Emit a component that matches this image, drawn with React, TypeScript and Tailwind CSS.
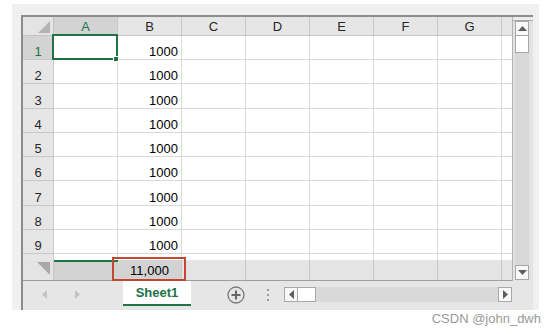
import React from 'react';

const cols = ['A', 'B', 'C', 'D', 'E', 'F', 'G'];
const rows = [1, 2, 3, 4, 5, 6, 7, 8, 9];

function CornerCell() {
  return (
    <div className="relative w-[31px] h-full shrink-0 bg-[#e4e4e4] border-r border-[#c4c4c4]">
      <svg className="absolute left-[15px] top-[4px]" width="12" height="12" viewBox="0 0 12 12">
        <polygon points="12,0 12,12 0,12" fill="#b4b4b4" />
      </svg>
    </div>
  );
}

function HeaderRow() {
  return (
    <div className="flex h-[19px] shrink-0 border-b border-[#c4c4c4]">
      <CornerCell />
      {cols.map((c) => (
        <div
          key={c}
          className={`w-[64px] shrink-0 h-full flex items-center justify-center pt-[1px] text-[13px] border-r border-[#c8c8c8] ${
            c === 'A' ? 'bg-[#d3d3d3] text-[#217346]' : 'bg-[#e6e6e6] text-[#262626]'
          }`}
        >
          {c}
        </div>
      ))}
      <div className="flex-1 h-full bg-[#e6e6e6]" />
    </div>
  );
}

function DataRow({ n }: { n: number }) {
  // rows in the shot are a hair over 24px, so two of them get an extra pixel
  const tall = n === 3 || n === 7;
  return (
    <div className={`flex shrink-0 ${tall ? 'h-[25px]' : 'h-[24px]'}`}>
      <div
        className={`w-[31px] shrink-0 h-full flex items-end justify-center pb-[1px] leading-[13px] text-[13px] border-r border-b border-[#c8c8c8] ${
          n === 1 ? 'bg-[#d3d3d3] text-[#217346]' : 'bg-[#e6e6e6] text-[#262626]'
        }`}
      >
        {n}
      </div>
      {/* column A */}
      <div className="relative w-[64px] shrink-0 h-full bg-white border-r border-b border-[#d9d9d9]">
        {n === 1 && (
          <div className="absolute -left-[2px] -top-[2px] w-[66px] h-[26px] border-2 border-[#217346] z-10">
            <div className="absolute -right-[3px] -bottom-[4px] w-[6px] h-[6px] bg-[#217346] border border-white" />
          </div>
        )}
      </div>
      {/* column B */}
      <div className="w-[64px] shrink-0 h-full bg-white border-r border-b border-[#d9d9d9] flex items-end justify-end pr-[3px] pb-[1px] leading-[13px] text-[13px] text-black">
        1000
      </div>
      {cols.slice(2).map((c) => (
        <div key={c} className="w-[64px] shrink-0 h-full bg-white border-r border-b border-[#d9d9d9]" />
      ))}
      <div className="flex-1 h-full bg-white border-b border-[#d9d9d9]" />
    </div>
  );
}

function PartialRow() {
  return (
    <div className="flex h-[6px] shrink-0">
      <div className="w-[31px] shrink-0 h-full bg-[#e6e6e6] border-r border-[#c8c8c8]" />
      {cols.map((c) => (
        <div key={c} className="w-[64px] shrink-0 h-full bg-white border-r border-[#d9d9d9]" />
      ))}
      <div className="flex-1 h-full bg-white" />
    </div>
  );
}

function TotalBand() {
  return (
    <div className="relative flex h-[21px] shrink-0 border-b border-[#9e9e9e] bg-[#e4e4e4]">
      <div className="relative w-[31px] shrink-0 h-full border-r border-[#c8c8c8]">
        <svg className="absolute left-[14px] top-[2px]" width="13" height="13" viewBox="0 0 13 13">
          <polygon points="0,0 13,0 13,13" fill="#a9a9a9" />
        </svg>
      </div>
      <div className="w-[64px] shrink-0 h-full bg-[#d2d2d2] border-t-2 border-[#217346]" />
      <div className="w-[64px] shrink-0 h-full bg-[#d2d2d2] border-r border-[#c8c8c8] flex items-center justify-center pt-[2px] text-[13px] text-black">
        11,000
      </div>
      {cols.slice(2).map((c) => (
        <div key={c} className="w-[64px] shrink-0 h-full border-r border-[#c8c8c8]" />
      ))}
      <div className="flex-1 h-full" />
      {/* annotation box */}
      <div className="absolute left-[89px] -top-[3px] w-[74px] h-[24px] border-2 border-[#c2472f]" />
    </div>
  );
}

function VScroll() {
  return (
    <div className="w-[21px] shrink-0 flex flex-col bg-[#e3e3e3] border-l border-[#b4b4b4]">
      <div className="h-[4px] shrink-0 bg-[#ededed] border-b border-[#a8a8a8]" />
      <div className="pl-[2px] pr-[4px] flex flex-col flex-1">
        <div className="h-[15px] shrink-0 bg-[#f8f8f8] border border-[#a8a8a8] flex items-center justify-center">
          <svg width="9" height="5" viewBox="0 0 9 5">
            <polygon points="0,5 9,5 4.5,0" fill="#5e5e5e" />
          </svg>
        </div>
        <div className="h-[17px] shrink-0 bg-white border border-t-0 border-[#a8a8a8]" />
        <div className="flex-1 bg-[#d8d8d8]" />
        <div className="h-[15px] shrink-0 bg-[#f8f8f8] border border-[#a8a8a8] flex items-center justify-center">
          <svg width="9" height="5" viewBox="0 0 9 5">
            <polygon points="0,0 9,0 4.5,5" fill="#5e5e5e" />
          </svg>
        </div>
        <div className="h-[1px] shrink-0" />
      </div>
    </div>
  );
}

function BottomBar() {
  return (
    <div className="flex h-[29px] shrink-0 bg-[#e6e6e6] items-start">
      <div className="flex items-center h-[26px] pl-[19px]">
        <svg width="5" height="9" viewBox="0 0 5 9">
          <polygon points="5,0 5,9 0,4.5" fill="#c3c3c3" />
        </svg>
        <svg className="ml-[28px]" width="5" height="9" viewBox="0 0 5 9">
          <polygon points="0,0 0,9 5,4.5" fill="#c3c3c3" />
        </svg>
      </div>
      <div className="ml-[43px] w-[68px] h-[25px] shrink-0 bg-white border-b-2 border-[#217346] flex items-center justify-center pt-[1px] text-[13px] font-bold text-[#217346]">
        Sheet1
      </div>
      <div className="ml-[36px] mt-[5px] shrink-0">
        <svg width="18" height="18" viewBox="0 0 18 18">
          <circle cx="9" cy="9" r="8" fill="none" stroke="#7a7a7a" strokeWidth="1.3" />
          <path d="M9 4.5 V13.5 M4.5 9 H13.5" stroke="#666666" strokeWidth="2" />
        </svg>
      </div>
      <div className="ml-[22px] mt-[8px] flex flex-col gap-[3px] shrink-0">
        <div className="w-[2px] h-[2px] bg-[#9a9a9a]" />
        <div className="w-[2px] h-[2px] bg-[#9a9a9a]" />
        <div className="w-[2px] h-[2px] bg-[#9a9a9a]" />
      </div>
      <div className="ml-[15px] mr-[21px] mt-[6px] flex-1 flex h-[15px]">
        <div className="w-[14px] h-full shrink-0 bg-[#f8f8f8] border border-[#a8a8a8] flex items-center justify-center">
          <svg width="5" height="9" viewBox="0 0 5 9">
            <polygon points="5,0 5,9 0,4.5" fill="#5e5e5e" />
          </svg>
        </div>
        <div className="w-[18px] h-full shrink-0 bg-white border border-l-0 border-[#a8a8a8]" />
        <div className="flex-1 h-full bg-[#d9d9d9]" />
        <div className="w-[14px] h-full shrink-0 bg-[#f8f8f8] border border-[#a8a8a8] flex items-center justify-center">
          <svg width="5" height="9" viewBox="0 0 5 9">
            <polygon points="0,0 0,9 5,4.5" fill="#5e5e5e" />
          </svg>
        </div>
      </div>
    </div>
  );
}

export default function App() {
  return (
    <div className="w-[556px] h-[334px] bg-white pl-[12px] pt-[4px] font-['Liberation_Sans',Arial,sans-serif]">
      <div className="w-[527px] h-[306px] bg-[#f0f0f0] pl-[9px] pt-[11px]">
        <div className="w-[512px] h-[295px] border-t-2 border-l-2 border-[#8c8c8c] flex flex-col">
          <div className="flex h-[264px] shrink-0">
            <div className="w-[489px] shrink-0 flex flex-col overflow-hidden">
              <HeaderRow />
              {rows.map((n) => (
                <DataRow key={n} n={n} />
              ))}
              <PartialRow />
              <TotalBand />
            </div>
            <VScroll />
          </div>
          <BottomBar />
        </div>
      </div>
      <div className="mt-[2px] pr-[15px] text-right text-[13px] leading-none text-[#9a9a9a]">
        CSDN @john_dwh
      </div>
    </div>
  );
}
